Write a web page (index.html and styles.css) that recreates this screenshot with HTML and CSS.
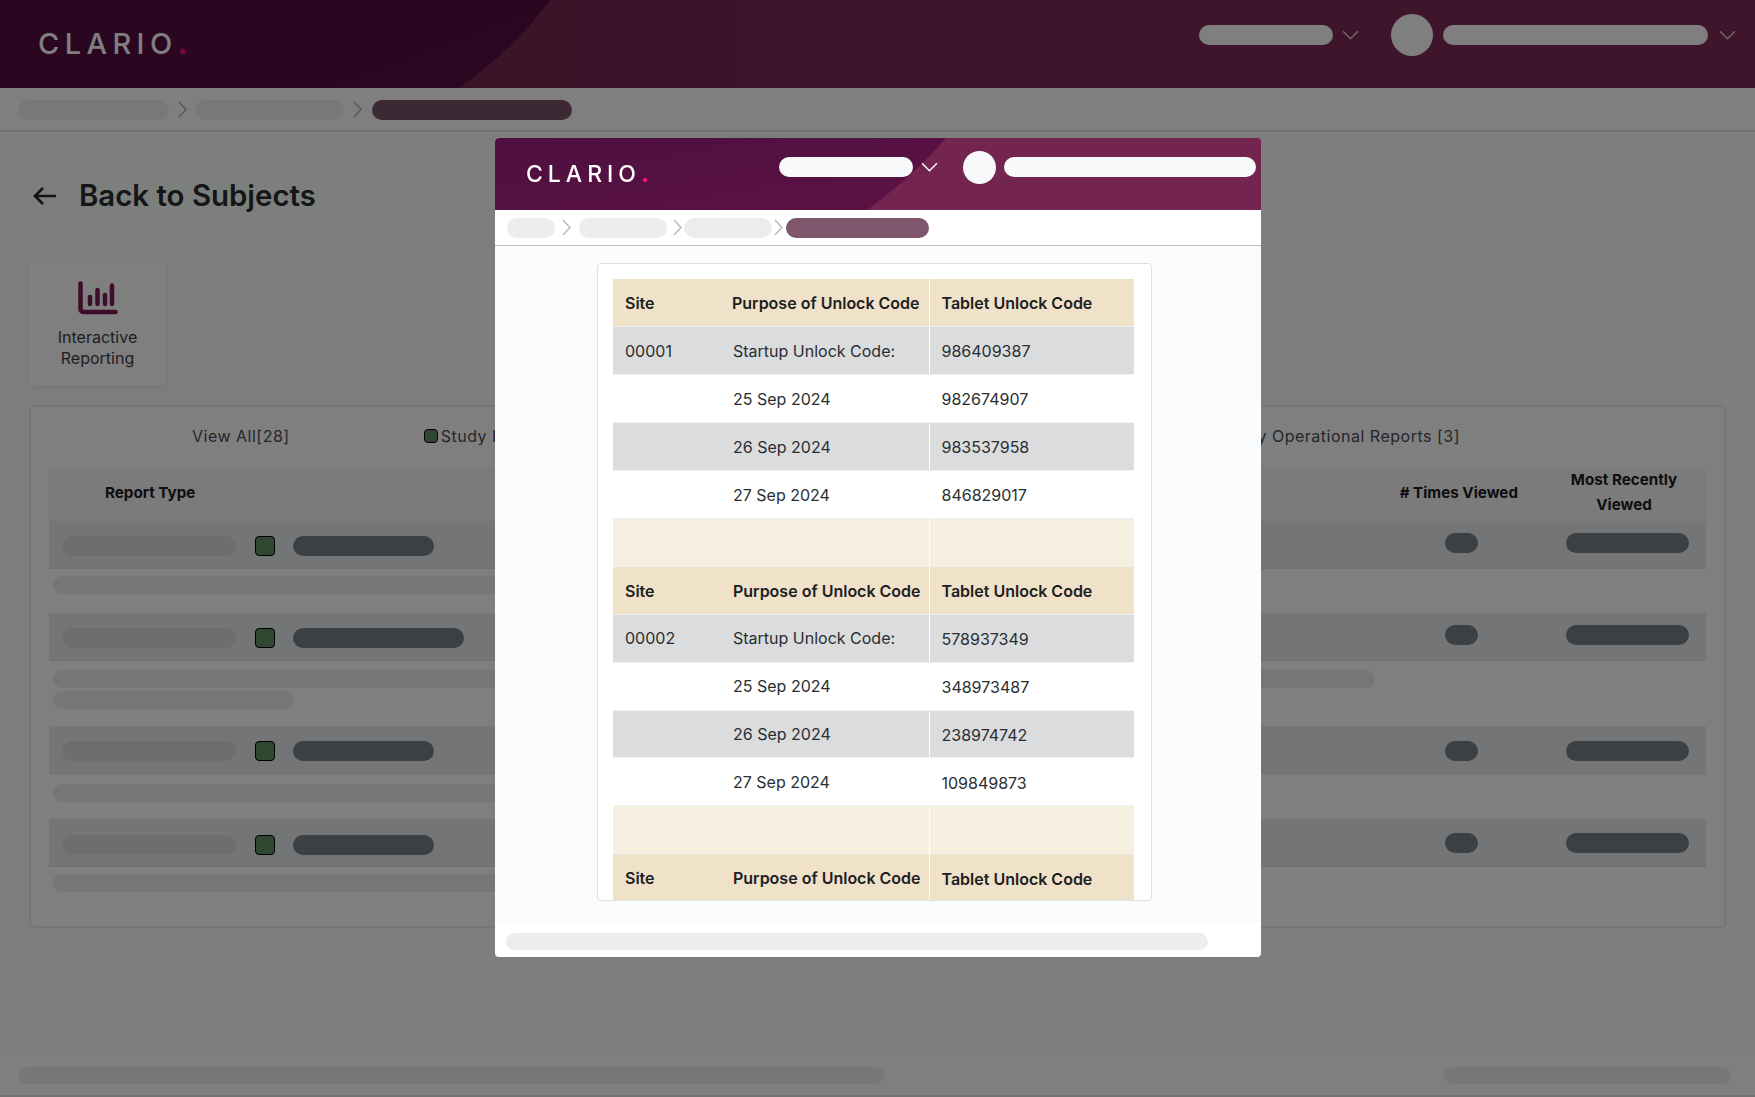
FILE: index.html
```html
<!DOCTYPE html>
<html lang="en">
<head>
    <meta charset="UTF-8">
    <meta name="viewport" content="width=device-width, initial-scale=1.0">
    <title>Back to Subjects</title>
    <link rel="stylesheet" href="styles.css">
</head>
<body>
    <div class="page">
        <header class="topbar">
            <div class="logo">CLARIO<span class="logo-dot">.</span></div>
            <div class="topbar-right">
                <span class="pill pill-study"></span>
                <svg class="chevron-down" viewBox="0 0 16 9"><polyline points="1,1 8,8 15,1"/></svg>
                <span class="avatar"></span>
                <span class="pill pill-user"></span>
                <svg class="chevron-down chevron-far" viewBox="0 0 16 9"><polyline points="1,1 8,8 15,1"/></svg>
            </div>
        </header>

        <nav class="crumbs">
            <span class="crumb crumb-a"></span>
            <svg class="chevron-right" viewBox="0 0 9 17"><polyline points="1,1 8,8.5 1,16"/></svg>
            <span class="crumb crumb-b"></span>
            <svg class="chevron-right" viewBox="0 0 9 17"><polyline points="1,1 8,8.5 1,16"/></svg>
            <span class="crumb crumb-current"></span>
        </nav>

        <main class="content">
            <div class="back-row">
                <svg class="back-arrow" viewBox="0 0 24 20"><path d="M23 10H2M10 2l-8 8 8 8"/></svg>
                <h1>Back to Subjects</h1>
            </div>

            <div class="tile">
                <svg class="tile-icon" viewBox="0 0 40 34">
                    <path d="M2.5 2.5V28a3 3 0 0 0 3 3H37.5"/>
                    <path d="M12 16v7M19.5 9v14M27 14v9M34 4.5V23"/>
                </svg>
                <span>Interactive<br>Reporting</span>
            </div>

            <section class="panel">
                <div class="tabs">
                    <span class="tab">View All[28]</span>
                    <span class="tab tab-study"><i class="tab-dot"></i>Study Information [25]</span>
                    <span class="tab tab-last">Study Operational Reports [3]</span>
                </div>

                <div class="report-head">
                    <span class="head-type">Report Type</span>
                    <span class="head-times"># Times Viewed</span>
                    <span class="head-recent">Most Recently<br>Viewed</span>
                </div>

                <div class="report-row">
                    <span class="bar bar-type"></span><span class="status"></span><span class="bar bar-name"></span>
                    <span class="bar bar-times"></span><span class="bar bar-date"></span>
                </div>
                <div class="report-note"><span class="note note-long"></span></div>

                <div class="report-row">
                    <span class="bar bar-type"></span><span class="status"></span><span class="bar bar-name bar-name-wide"></span>
                    <span class="bar bar-times"></span><span class="bar bar-date"></span>
                </div>
                <div class="report-note report-note-two">
                    <span class="note note-wide"></span>
                    <span class="note note-short"></span>
                </div>

                <div class="report-row report-row-level">
                    <span class="bar bar-type"></span><span class="status"></span><span class="bar bar-name"></span>
                    <span class="bar bar-times"></span><span class="bar bar-date"></span>
                </div>
                <div class="report-note report-note-low"><span class="note note-long"></span></div>

                <div class="report-row report-row-near">
                    <span class="bar bar-type"></span><span class="status"></span><span class="bar bar-name"></span>
                    <span class="bar bar-times"></span><span class="bar bar-date"></span>
                </div>
                <div class="report-note"><span class="note note-long"></span></div>
            </section>
        </main>

        <footer class="page-footer">
            <span class="foot-pill foot-left"></span>
            <span class="foot-pill foot-right"></span>
        </footer>
    </div>

    <div class="overlay"></div>

    <div class="modal">
        <div class="modal-top">
            <div class="logo logo-small">CLARIO<span class="logo-dot">.</span></div>
            <div class="modal-top-right">
                <span class="pill pill-light pill-m-study"></span>
                <svg class="chevron-down chevron-white" viewBox="0 0 16 9"><polyline points="1,1 8,8 15,1"/></svg>
                <span class="avatar avatar-light"></span>
                <span class="pill pill-light pill-m-user"></span>
            </div>
        </div>

        <nav class="modal-crumbs">
            <span class="m-crumb m-crumb-a"></span>
            <svg class="chevron-right" viewBox="0 0 9 17"><polyline points="1,1 8,8.5 1,16"/></svg>
            <span class="m-crumb m-crumb-b"></span>
            <svg class="chevron-right" viewBox="0 0 9 17"><polyline points="1,1 8,8.5 1,16"/></svg>
            <span class="m-crumb m-crumb-c"></span>
            <svg class="chevron-right" viewBox="0 0 9 17"><polyline points="1,1 8,8.5 1,16"/></svg>
            <span class="m-crumb m-crumb-current"></span>
        </nav>

        <div class="modal-body">
            <div class="codes-card">
                <table class="codes">
                    <tr class="row-head row-head-first"><td>Site</td><td>Purpose of Unlock Code</td><td>Tablet Unlock Code</td></tr>
                    <tr class="row-grey"><td>00001</td><td>Startup Unlock Code:</td><td>986409387</td></tr>
                    <tr><td></td><td>25 Sep 2024</td><td>982674907</td></tr>
                    <tr class="row-grey"><td></td><td>26 Sep 2024</td><td>983537958</td></tr>
                    <tr><td></td><td>27 Sep 2024</td><td>846829017</td></tr>
                    <tr class="row-gap"><td></td><td></td><td></td></tr>
                    <tr class="row-head"><td>Site</td><td>Purpose of Unlock Code</td><td>Tablet Unlock Code</td></tr>
                    <tr class="row-grey nudge"><td>00002</td><td>Startup Unlock Code:</td><td>578937349</td></tr>
                    <tr class="nudge"><td></td><td>25 Sep 2024</td><td>348973487</td></tr>
                    <tr class="row-grey nudge"><td></td><td>26 Sep 2024</td><td>238974742</td></tr>
                    <tr class="nudge"><td></td><td>27 Sep 2024</td><td>109849873</td></tr>
                    <tr class="row-gap"><td></td><td></td><td></td></tr>
                    <tr class="row-head nudge"><td>Site</td><td>Purpose of Unlock Code</td><td>Tablet Unlock Code</td></tr>
                </table>
            </div>
        </div>

        <div class="modal-foot"><span class="modal-foot-pill"></span></div>
    </div>
</body>
</html>
```

FILE: styles.css
```css
* {
    box-sizing: border-box;
}
html, body {
    margin: 0;
    height: 100%;
    overflow: hidden;
}
body {
    font-family: Inter, "Noto Sans", sans-serif;
    color: #2c3033;
    background: #fbfffb;
}
.page {
    height: 1097px;
    display: flex;
    flex-direction: column;
}

/* top bar */
.topbar {
    position: relative;
    flex: none;
    height: 88px;
    background: linear-gradient(160deg, #540c42, #5c1044);
    display: flex;
    padding-left: 38px;
}
.topbar::before {
    content: "";
    position: absolute;
    inset: 0;
    background: linear-gradient(90deg, #762850, #7e2a56);
    clip-path: path("M459 88 C495 62 525 35 550 0 L1755 0 L1755 88 Z");
}
.logo {
    position: relative;
    font-size: 29px;
    line-height: 88px;
    letter-spacing: 5.4px;
    color: #fff;
    font-weight: 500;
}
.logo-dot {
    color: #ff0f73;
    font-weight: 800;
    letter-spacing: 0;
}
.topbar-right {
    position: absolute;
    left: 1199px;
    top: 14px;
    display: flex;
    align-items: center;
    height: 42px;
}
.pill {
    display: block;
    height: 20px;
    border-radius: 10px;
    background: #fff;
}
.pill-study { width: 134px; }
.pill-user { width: 265px; margin-left: 10px; }
.avatar {
    width: 42px;
    height: 42px;
    border-radius: 50%;
    background: #fff;
    margin-left: 32px;
}
.chevron-down {
    width: 17px;
    height: 10px;
    margin-left: 9px;
    fill: none;
    stroke: #fff;
    stroke-width: 1.5;
    opacity: .75;
}
.chevron-far {
    margin-left: 11px;
}

/* breadcrumbs */
.crumbs {
    flex: none;
    height: 44px;
    border-bottom: 2px solid #e2e5e4;
    background: #fff;
    display: flex;
    align-items: center;
    padding: 1px 0 0 18px;
}
.crumb {
    height: 20px;
    border-radius: 10px;
    background: #f0f1f4;
}
.crumb-a { width: 151px; }
.crumb-b { width: 148px; }
.crumb-current { width: 200px; background: #7a5266; }
.chevron-right {
    flex: none;
    width: 9px;
    height: 17px;
    margin: 0 9px;
    fill: none;
    stroke: #a9acae;
    stroke-width: 1.4;
}
.crumbs .chevron-right { margin: 0 9px 0 9px; }
.crumbs .chevron-right:nth-of-type(2) { margin: 0 10px 0 9px; }

/* page content */
.content {
    flex: 1;
    padding: 0 29px;
}
.back-row {
    display: flex;
    align-items: center;
    padding: 43px 0 0 4px;
    height: 84px;
}
.back-arrow {
    width: 24px;
    height: 20px;
    fill: none;
    stroke: #22262a;
    stroke-width: 2.6;
}
h1 {
    margin: 0 0 0 22px;
    font-size: 29.4px;
    font-weight: 600;
    line-height: 40px;
    color: #282c30;
}
.tile {
    margin-top: 45px;
    width: 137px;
    height: 124px;
    border-radius: 4px;
    background: #fff;
    box-shadow: 0 3px 8px rgba(0, 0, 0, .08);
    display: flex;
    flex-direction: column;
    align-items: center;
    padding-top: 20px;
    font-size: 16px;
    line-height: 21px;
    text-align: center;
    color: #3c4044;
}
.tile-icon {
    width: 40px;
    height: 34px;
    margin-bottom: 12px;
    fill: none;
    stroke: #7a1a56;
    stroke-width: 4.5;
    stroke-linecap: round;
}
.panel {
    margin-top: 20px;
    height: 523px;
    width: 1697px;
    border: 2px solid #e8ebea;
    border-radius: 5px;
    background: #fff;
    padding: 0 18px;
}
.tabs {
    display: flex;
    align-items: center;
    height: 61px;
    padding: 0 246px 3px 143px;
    font-size: 16px;
    letter-spacing: .5px;
    color: #4a4e52;
}
.tab-study {
    display: flex;
    align-items: center;
    margin-left: 134px;
}
.tab-dot {
    width: 14px;
    height: 14px;
    margin-right: 3px;
    border-radius: 4px;
    border: 1.5px solid #000;
    background: #5e8f62;
}
.tab-last {
    margin-left: auto;
}
.report-head {
    position: relative;
    height: 53px;
    background: #f6f6f7;
    font-size: 15.2px;
    font-weight: 700;
    color: #1a1c1e;
    display: flex;
    align-items: center;
    line-height: 25px;
}
.head-type { margin: 0 0 4px 56px; }
.head-times { margin: 0 0 4px auto; }
.head-recent {
    width: 164px;
    margin: 0 0 6px 24px;
    text-align: center;
}
.report-row {
    display: flex;
    align-items: center;
    height: 48px;
    padding: 3px 17px 0 13px;
    background: #e8eaee;
    border-bottom: 1px solid #dcdee2;
}
.bar {
    display: block;
    height: 20px;
    border-radius: 10px;
}
.bar-type { width: 174px; background: #dadcdf; }
.status {
    width: 20px;
    height: 20px;
    margin: 0 18px 0 19px;
    border-radius: 4px;
    border: 1.5px solid #000;
    background: #5e8f62;
}
.bar-name { width: 141px; background: #788086; }
.bar-name-wide { width: 171px; }
.bar-times { width: 33px; margin: 0 0 7px auto; background: #788086; }
.bar-date { width: 123px; margin: 0 0 7px 88px; background: #788086; }
.report-row-level .bar-times, .report-row-level .bar-date { margin-bottom: 0; }
.report-row-near { padding-top: 5px; }
.report-row-near .bar-times, .report-row-near .bar-date { margin-bottom: 4px; }
.report-note {
    height: 44px;
    padding: 7px 0 0 4px;
}
.report-note-two {
    height: 65px;
    padding-top: 9px;
}
.report-note-low {
    height: 45px;
    padding-top: 10px;
}
.note {
    display: block;
    height: 18px;
    border-radius: 9px;
    background: #eaecf0;
}
.note-long { width: 1000px; }
.note-wide { width: 1322px; }
.note-short { width: 240px; margin-top: 3px; }
.page-footer {
    flex: none;
    height: 45px;
    background: #fff;
    border-bottom: 2px solid #e0e2e2;
    display: flex;
    justify-content: space-between;
    padding: 15px 24px 0 19px;
}
.foot-pill {
    height: 17px;
    border-radius: 9px;
    background: #eceef2;
}
.foot-left { width: 865px; }
.foot-right { width: 287px; }

.overlay {
    position: fixed;
    inset: 0;
    background: rgba(0, 0, 0, .5);
    backdrop-filter: blur(.6px);
}

/* modal */
.modal {
    position: absolute;
    left: 495px;
    top: 138px;
    width: 766px;
    height: 819px;
    border-radius: 4px;
    overflow: hidden;
    background: #fff;
    display: flex;
    flex-direction: column;
}
.modal-top {
    position: relative;
    flex: none;
    height: 72px;
    background: linear-gradient(170deg, #4e0f40, #611445);
    padding-left: 31px;
}
.modal-top::before {
    content: "";
    position: absolute;
    inset: 0;
    background: #73244f;
    clip-path: path("M372 72 C402 50 430 25 451 0 L766 0 L766 72 Z");
}
.logo-small {
    font-size: 23px;
    letter-spacing: 5px;
    line-height: 72px;
}
.modal-top-right {
    position: absolute;
    left: 284px;
    top: 12px;
    display: flex;
    align-items: center;
    height: 34px;
}
.pill-light { background: #f8f9fb; }
.pill-m-study { width: 134px; }
.pill-m-user { width: 252px; margin-left: 8px; }
.chevron-white {
    margin-left: 8px;
    opacity: 1;
    stroke-width: 1.3;
}
.avatar-light {
    width: 33px;
    height: 33px;
    margin-left: 25px;
    background: #f8f9fb;
}
.modal-crumbs {
    flex: none;
    height: 36px;
    display: flex;
    align-items: center;
    border-bottom: 1px solid #b9bcbf;
    padding-left: 12px;
}
.m-crumb {
    height: 20px;
    border-radius: 10px;
    background: #ecedef;
}
.m-crumb-a { width: 48px; }
.m-crumb-b { width: 88px; }
.m-crumb-c { width: 88px; }
.m-crumb-current { width: 143px; background: #7f566c; }
.modal-crumbs .chevron-right {
    margin: 0 8px 0 7px;
    stroke: #b4b7ba;
}
.modal-crumbs .chevron-right:nth-of-type(2) { margin: 0 2px 0 6px; }
.modal-crumbs .chevron-right:nth-of-type(3) { margin: 0 3px 0 2px; }
.modal-body {
    flex: none;
    height: 676px;
    background: #fbfcfe;
    padding: 17px 0 0 102px;
}
.codes-card {
    width: 555px;
    height: 638px;
    border: 1px solid #dcdfe3;
    border-radius: 4px;
    background: #fff;
    padding: 15px 0 0 15px;
    overflow: hidden;
}
.codes {
    width: 521px;
    table-layout: fixed;
    border-collapse: collapse;
    font-size: 16px;
    color: #2a2e32;
}
.codes td {
    height: 47.9px;
    padding: 0 0 0 12px;
    border-bottom: 1px solid #f0f1f2;
}
.codes td:first-child { width: 108px; }
.codes td:nth-child(2) { width: 208px; border-right: 1px solid #fff; }
.row-head td {
    padding-top: 1px;
    background: #efe2c8;
    font-weight: 600;
    color: #1d2023;
}
.row-head-first td:nth-child(2) { padding-left: 11px; }
.row-grey td { background: #dbdcde; }
.row-gap td { background: #f5efe0; }
.nudge td:last-child { padding-top: 2px; }

.modal-foot {
    flex: 1;
    padding: 11px 0 0 11px;
}
.modal-foot-pill {
    display: block;
    width: 702px;
    height: 17px;
    border-radius: 9px;
    background: #ecedef;
}
```
